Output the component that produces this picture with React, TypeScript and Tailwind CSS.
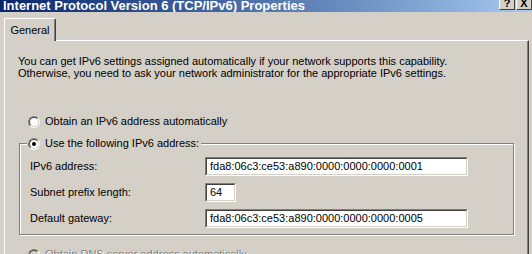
import type { ReactNode } from "react";

const FACE = "bg-[#d4d0c8]";

function Radio({ checked = false, disabled = false }: { checked?: boolean; disabled?: boolean }) {
  return (
    <span className="flex h-[12px] w-[12px] shrink-0 items-center justify-center rounded-full border border-t-[#808080] border-l-[#808080] border-r-white border-b-white">
      <span
        className={
          "flex h-[10px] w-[10px] items-center justify-center rounded-full border border-t-[#404040] border-l-[#404040] border-r-[#d4d0c8] border-b-[#d4d0c8] " +
          (disabled ? "bg-[#d4d0c8]" : "bg-white")
        }
      >
        {checked && <span className="h-[4px] w-[4px] rounded-full bg-black" />}
      </span>
    </span>
  );
}

function RadioRow({
  label,
  checked,
  disabled,
  className = "",
}: {
  label: string;
  checked?: boolean;
  disabled?: boolean;
  className?: string;
}) {
  return (
    <div className={"flex h-[13px] items-center gap-[5px] " + className}>
      <Radio checked={checked} disabled={disabled} />
      <span
        className={
          "whitespace-nowrap leading-[13px] " +
          (disabled ? "text-[#808080] [text-shadow:1px_1px_0_#fff]" : "text-black")
        }
      >
        {label}
      </span>
    </div>
  );
}

function EditBox({ value, width }: { value: string; width: string }) {
  return (
    <div className={"h-[19px] border border-t-[#808080] border-l-[#808080] border-r-white border-b-white " + width}>
      <div className="flex h-full items-center border border-t-[#404040] border-l-[#404040] border-r-[#d4d0c8] border-b-[#d4d0c8] bg-white pl-[3px] whitespace-nowrap">
        {value}
      </div>
    </div>
  );
}

function FieldRow({ label, children }: { label: string; children: ReactNode }) {
  return (
    <div className="flex items-center">
      <span className="w-[175px] shrink-0 whitespace-nowrap">{label}</span>
      {children}
    </div>
  );
}

function CaptionButton({ children }: { children: ReactNode }) {
  return (
    <div className="flex h-[13px] w-[16px] items-center justify-center border border-t-white border-l-white border-r-[#404040] border-b-[#404040] bg-[#d4d0c8] text-[11px] font-bold leading-[11px] text-black">
      {children}
    </div>
  );
}

export default function App() {
  return (
    <div
      className={
        "flex h-[254px] w-[532px] flex-col overflow-hidden text-[11px] text-black font-['Liberation_Sans',Arial,sans-serif] " +
        FACE
      }
    >
      {/* caption */}
      <div className="flex h-[12px] shrink-0 items-start overflow-hidden bg-linear-to-r from-[#0a246a] to-[#a6caf0]">
        <span className="-mt-[1px] ml-[3px] flex-1 whitespace-nowrap text-[13px] font-bold leading-[13px] text-white">
          Internet Protocol Version 6 (TCP/IPv6) Properties
        </span>
        <div className="-mt-[3px] flex gap-[1px] pr-[0px]">
          <CaptionButton>?</CaptionButton>
          <CaptionButton>X</CaptionButton>
        </div>
      </div>

      {/* tab strip */}
      <div className="ml-[4px] mt-[6px] flex">
        <div className="relative z-10 -mb-[1px] flex h-[23px] w-[52px] items-center justify-center rounded-t-[2px] border border-b-0 border-t-white border-l-white border-r-[#404040] bg-[#d4d0c8] shadow-[inset_-1px_0_0_#808080]">
          General
        </div>
      </div>

      {/* tab page */}
      <div className="ml-[4px] h-[260px] w-[525px] shrink-0 border border-t-white border-l-white border-r-[#404040] border-b-[#404040] pl-[13px] pt-[14px] shadow-[inset_-1px_-1px_0_#808080]">
        <p className="leading-[12px]">
          You can get IPv6 settings assigned automatically if your network supports this capability.
          <br />
          Otherwise, you need to ask your network administrator for the appropriate IPv6 settings.
        </p>

        <RadioRow className="ml-[10px] mt-[36px]" label="Obtain an IPv6 address automatically" />

        {/* group box */}
        <div className="ml-[1px] mt-[15px] h-[92px] w-[495px] border border-[#808080] shadow-[inset_1px_1px_0_#fff,1px_1px_0_#fff]">
          <div className="-mt-[7px] ml-[7px] flex w-fit bg-[#d4d0c8] pl-[1px] pr-[2px]">
            <RadioRow checked label="Use the following IPv6 address:" />
          </div>
          <div className="ml-[10px] mt-[7px] flex flex-col gap-[7px]">
            <FieldRow label="IPv6 address:">
              <EditBox width="w-[263px]" value="fda8:06c3:ce53:a890:0000:0000:0000:0001" />
            </FieldRow>
            <FieldRow label="Subnet prefix length:">
              <EditBox width="w-[31px]" value="64" />
            </FieldRow>
            <FieldRow label="Default gateway:">
              <EditBox width="w-[263px]" value="fda8:06c3:ce53:a890:0000:0000:0000:0005" />
            </FieldRow>
          </div>
        </div>

        <RadioRow className="ml-[10px] mt-[13px]" disabled label="Obtain DNS server address automatically" />
      </div>
    </div>
  );
}
